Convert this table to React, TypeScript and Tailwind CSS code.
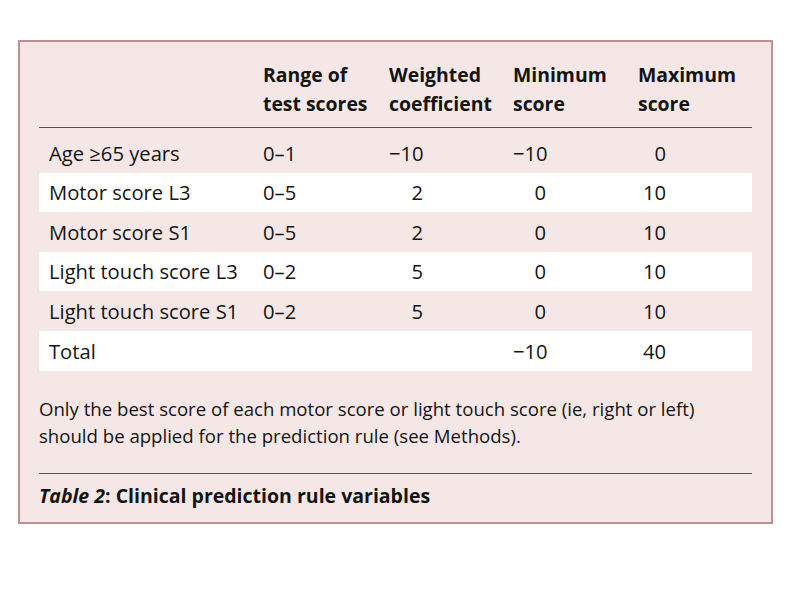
export default function App() {
  const rows = [
    { label: 'Age ≥65 years', range: '0–1', coef: '−10', min: '−10', max: '0', white: false },
    { label: 'Motor score L3', range: '0–5', coef: '2', min: '0', max: '10', white: true },
    { label: 'Motor score S1', range: '0–5', coef: '2', min: '0', max: '10', white: false },
    { label: 'Light touch score L3', range: '0–2', coef: '5', min: '0', max: '10', white: true },
    { label: 'Light touch score S1', range: '0–2', coef: '5', min: '0', max: '10', white: false },
    { label: 'Total', range: '', coef: '', min: '−10', max: '40', white: true },
  ];

  return <div className="min-h-[600px] w-[800px] bg-white pt-[40px] pl-[18px] font-['Open_Sans',sans-serif] text-[#141414]">
    <div className="w-[755px] h-[484px] bg-[#f5e7e5] border-2 border-[#bf8f92] px-[19px] pt-[18px]">
      {/* Header */}
      <div className="grid grid-cols-[224px_126px_124px_125px_114px] border-b-[1.5px] border-[#555] pb-[9px] text-[19.4px] leading-[29px] font-bold">
        <div></div>
        <div>Range of<br />test scores</div>
        <div>Weighted<br />coefficient</div>
        <div>Minimum<br />score</div>
        <div>Maximum<br />score</div>
      </div>

      {/* Body */}
      <div className="pt-[5px] text-[20.2px]">
        {rows.map((r) => <div key={r.label} className={`grid grid-cols-[224px_126px_124px_125px_114px] h-[39.6px] items-center ${r.white ? 'bg-white' : ''}`}>
          <div className="pl-[10px]">{r.label}</div>
          <div>{r.range}</div>
          <div><span className="inline-block w-[34px] text-right">{r.coef}</span></div>
          <div><span className="inline-block w-[33px] text-right">{r.min}</span></div>
          <div><span className="inline-block w-[28px] text-right">{r.max}</span></div>
        </div>)}
      </div>

      {/* Footnote */}
      <p className="mt-[24px] text-[18.6px] leading-[27px]">
        Only the best score of each motor score or light touch score (ie, right or left)<br />
        should be applied for the prediction rule (see Methods).
      </p>

      <div className="mt-[24px] border-t-[1.5px] border-[#555] pt-[7px] text-[19.5px] font-bold">
        <span className="italic">Table 2</span>: Clinical prediction rule variables
      </div>
    </div>
  </div>;
}
